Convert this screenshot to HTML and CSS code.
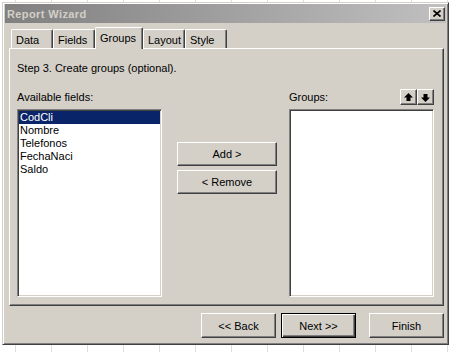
FILE: index.html
```html
<!DOCTYPE html>
<html lang="en">
<head>
    <meta charset="UTF-8">
    <meta name="viewport" content="width=device-width, initial-scale=1.0">
    <title>Report Wizard</title>
    <link rel="stylesheet" href="styles.css">
</head>
<body>
    <div class="window">
        <div class="titlebar">
            <span class="title">Report Wizard</span>
            <button type="button" class="close" title="Close">
                <svg width="8" height="7" viewBox="0 0 8 7"><path d="M0.5 0.5 L7.5 6.5 M7.5 0.5 L0.5 6.5" stroke="#000" stroke-width="1.6" fill="none"/></svg>
            </button>
        </div>
        <div class="content">
            <div class="tabs">
                <div class="tab">Data</div>
                <div class="tab">Fields</div>
                <div class="tab active">Groups</div>
                <div class="tab">Layout</div>
                <div class="tab">Style</div>
            </div>
            <div class="panel">
                <p class="step">Step 3. Create groups (optional).</p>
                <div class="columns">
                    <div class="col">
                        <div class="label-row"><span>Available fields:</span></div>
                        <ul class="listbox">
                            <li class="selected">CodCli</li>
                            <li>Nombre</li>
                            <li>Telefonos</li>
                            <li>FechaNaci</li>
                            <li>Saldo</li>
                        </ul>
                    </div>
                    <div class="mid">
                        <button type="button" class="btn btn-wide">Add &gt;</button>
                        <button type="button" class="btn btn-wide">&lt; Remove</button>
                    </div>
                    <div class="col">
                        <div class="label-row">
                            <span>Groups:</span>
                            <div class="order">
                                <button type="button" class="btn btn-arrow" title="Move up">
                                    <svg width="9" height="9" viewBox="0 0 9 9"><path d="M4.5 0 L9 4.5 L6.5 4.5 L6.5 8 L2.5 8 L2.5 4.5 L0 4.5 Z" fill="#000"/></svg>
                                </button>
                                <button type="button" class="btn btn-arrow" title="Move down">
                                    <svg width="9" height="9" viewBox="0 0 9 9"><path d="M4.5 9 L9 4.5 L6.5 4.5 L6.5 1 L2.5 1 L2.5 4.5 L0 4.5 Z" fill="#000"/></svg>
                                </button>
                            </div>
                        </div>
                        <ul class="listbox"></ul>
                    </div>
                </div>
            </div>
            <div class="footer">
                <button type="button" class="btn btn-back">&lt;&lt; Back</button>
                <button type="button" class="btn btn-default">Next &gt;&gt;</button>
                <button type="button" class="btn">Finish</button>
            </div>
        </div>
    </div>
</body>
</html>
```

FILE: styles.css
```css
* {
    box-sizing: border-box;
}
html, body {
    margin: 0;
    padding: 0;
}
body {
    width: 451px;
    height: 352px;
    font-family: "Liberation Sans", Arial, sans-serif;
    font-size: 11px;
    color: #000;
    background-color: #fff;
    background-image: repeating-linear-gradient(90deg, transparent 0, transparent 15px, #dedede 15px, #dedede 16px, transparent 16px, transparent 36px);
    overflow: hidden;
}
.window {
    width: 447px;
    height: 343px;
    margin: 2px 0 0 2px;
    padding: 1px 2px 2px 2px;
    background: #d4d0c8;
    border: 1px solid;
    border-color: #d4d0c8 #404040 #404040 #d4d0c8;
    box-shadow: inset 1px 1px #fff, inset -1px -1px #808080;
    display: flex;
    flex-direction: column;
}
.titlebar {
    height: 19px;
    display: flex;
    align-items: center;
    justify-content: space-between;
    padding: 0 1px 0 2px;
    background: linear-gradient(to right, #808080, #c0c0c0);
}
.title {
    color: #d4d0c8;
    font-weight: bold;
    font-size: 11px;
    letter-spacing: 0.4px;
}
.close {
    width: 16px;
    height: 14px;
    padding: 0;
    display: flex;
    align-items: center;
    justify-content: center;
    background: #d4d0c8;
    border: 1px solid;
    border-color: #fff #404040 #404040 #fff;
    box-shadow: inset -1px -1px #808080;
}
.content {
    flex: 1;
    padding: 4px 2px 4px 4px;
    display: flex;
    flex-direction: column;
}
.tabs {
    height: 21px;
    display: flex;
    align-items: flex-end;
    padding-left: 2px;
}
.tab {
    width: 42px;
    height: 19px;
    padding: 4px 0 0 4px;
    line-height: 13px;
    border: 1px solid #fff;
    border-right-color: #404040;
    border-bottom: none;
    border-radius: 2px 2px 0 0;
    box-shadow: inset -1px 0 #808080;
    white-space: nowrap;
}
.tab.active {
    width: 48px;
    height: 22px;
    margin-bottom: -1px;
    padding-top: 4px;
    position: relative;
    z-index: 1;
    background: #d4d0c8;
}
.panel {
    height: 258px;
    padding: 13px 0 0 7px;
    border: 1px solid;
    border-color: #fff #404040 #404040 #fff;
    box-shadow: inset -1px -1px #808080;
}
.step {
    margin: 0 0 14px;
    line-height: 13px;
}
.columns {
    display: flex;
}
.col {
    width: 145px;
}
.label-row {
    height: 16px;
    margin-bottom: 4px;
    display: flex;
    align-items: center;
    justify-content: space-between;
    line-height: 13px;
}
.order {
    display: flex;
}
.listbox {
    height: 188px;
    margin: 0;
    padding: 1px;
    list-style: none;
    background: #fff;
    border: 1px solid;
    border-color: #808080 #fff #fff #808080;
    box-shadow: inset 1px 1px #404040, inset -1px -1px #d4d0c8;
}
.listbox li {
    height: 13px;
    line-height: 13px;
    padding-left: 1px;
    white-space: nowrap;
}
.listbox li.selected {
    background: #0a246a;
    color: #fff;
}
.mid {
    width: 100px;
    margin: 0 12px 0 15px;
    padding-top: 53px;
    display: flex;
    flex-direction: column;
    gap: 4px;
}
.btn {
    width: 75px;
    height: 25px;
    padding: 0;
    font-family: inherit;
    font-size: 11px;
    color: #000;
    background: #d4d0c8;
    border: 1px solid;
    border-color: #fff #404040 #404040 #fff;
    box-shadow: inset -1px -1px #808080;
}
.btn-wide {
    width: 100px;
    height: 24px;
}
.btn-arrow {
    width: 17px;
    height: 16px;
    display: flex;
    align-items: center;
    justify-content: center;
}
.btn-default {
    border-color: #000;
    box-shadow: inset 1px 1px #fff, inset -1px -1px #404040, inset -2px -2px #808080;
}
.footer {
    margin-top: 7px;
    display: flex;
    justify-content: flex-end;
}
.btn-back {
    margin-right: 5px;
}
.btn-default {
    margin-right: 13px;
}
```
